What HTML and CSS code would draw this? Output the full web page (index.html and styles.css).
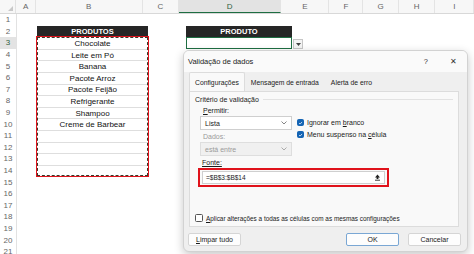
FILE: index.html
```html
<!DOCTYPE html>
<html>
<head>
    <meta charset="utf-8">
    <title>Validação de dados</title>
    <link rel="stylesheet" href="styles.css">
</head>
<body>
    <div class="sheet">
        <div class="colheads">
            <div class="corner"><span class="tri"></span></div>
            <div class="ch w-a">A</div>
            <div class="ch w-b">B</div>
            <div class="ch w-c">C</div>
            <div class="ch w-d active">D</div>
            <div class="ch w-e">E</div>
            <div class="ch w-f">F</div>
            <div class="ch w-g">G</div>
            <div class="ch w-h">H</div>
            <div class="ch w-i">I</div>
        </div>
        <div class="body">
            <div class="rowheads">
                <div class="rh">1</div>
                <div class="rh">2</div>
                <div class="rh active">3</div>
                <div class="rh">4</div>
                <div class="rh">5</div>
                <div class="rh">6</div>
                <div class="rh">7</div>
                <div class="rh">8</div>
                <div class="rh">9</div>
                <div class="rh">10</div>
                <div class="rh">11</div>
                <div class="rh">12</div>
                <div class="rh">13</div>
                <div class="rh">14</div>
                <div class="rh">15</div>
                <div class="rh">16</div>
                <div class="rh">17</div>
                <div class="rh">18</div>
                <div class="rh">19</div>
                <div class="rh">20</div>
                <div class="rh">21</div>
            </div>
            <div class="col w-a"></div>
            <div class="col w-b">
                <div class="cell"></div>
                <div class="cell head">PRODUTOS</div>
                <div class="list">
                    <div class="cell item">Chocolate</div>
                    <div class="cell item">Leite em Pó</div>
                    <div class="cell item">Banana</div>
                    <div class="cell item">Pacote Arroz</div>
                    <div class="cell item">Pacote Feijão</div>
                    <div class="cell item">Refrigerante</div>
                    <div class="cell item">Shampoo</div>
                    <div class="cell item">Creme de Barbear</div>
                    <div class="cell item"></div>
                    <div class="cell item"></div>
                    <div class="cell item"></div>
                    <div class="cell item"></div>
                </div>
            </div>
            <div class="col w-c"></div>
            <div class="col w-d">
                <div class="cell"></div>
                <div class="cell head">PRODUTO</div>
                <div class="cell sel">
                    <span class="dd">
                        <svg width="5" height="3" viewBox="0 0 5 3"><path d="M0 0h5L2.5 3z" fill="#444"/></svg>
                    </span>
                </div>
            </div>
        </div>
    </div>

    <!-- janela de validação -->
    <div class="dialog">
        <div class="title">
            <span>Validação de dados</span>
            <span class="title-btns"><span>?</span><span class="close">✕</span></span>
        </div>
        <div class="tabs">
            <span class="tab on">Configurações</span>
            <span class="tab">Mensagem de entrada</span>
            <span class="tab">Alerta de erro</span>
        </div>
        <div class="panel">
            <div class="group">
                <span>Critério de validação</span>
                <span class="rule"></span>
            </div>
            <div class="criteria">
                <div class="left">
                    <div class="lbl"><span><u>P</u>ermitir:</span></div>
                    <div class="select">
                        <span>Lista</span>
                        <svg width="6" height="4" viewBox="0 0 6 4"><path d="M0.5 0.5L3 3L5.5 0.5" fill="none" stroke="#666" stroke-width="0.8"/></svg>
                    </div>
                    <div class="lbl dim">Dados:</div>
                    <div class="select disabled">
                        <span>está entre</span>
                        <svg width="6" height="4" viewBox="0 0 6 4"><path d="M0.5 0.5L3 3L5.5 0.5" fill="none" stroke="#999" stroke-width="0.8"/></svg>
                    </div>
                </div>
                <div class="checks">
                    <div class="chk"><span class="box on"><svg width="6" height="6" viewBox="0 0 6 6"><path d="M1.2 3.1L2.5 4.3L4.9 1.7" fill="none" stroke="#fff" stroke-width="0.9"/></svg></span><span>Ignorar em <u>b</u>ranco</span></div>
                    <div class="chk"><span class="box on"><svg width="6" height="6" viewBox="0 0 6 6"><path d="M1.2 3.1L2.5 4.3L4.9 1.7" fill="none" stroke="#fff" stroke-width="0.9"/></svg></span><span>Menu suspenso na <u>c</u>élula</span></div>
                </div>
            </div>
            <div class="lbl fonte"><span><u>Fonte:</u></span></div>
            <div class="mark">
                <div class="source">
                    <span>=$B$3:$B$14</span>
                    <svg width="7" height="7" viewBox="0 0 7 7"><path d="M3.5 0.6L6 3.4H4.4V5H2.6V3.4H1z" fill="#222"/><path d="M1 6.2H6" stroke="#222" stroke-width="0.9"/></svg>
                </div>
            </div>
            <div class="chk apply"><span class="box"></span><span><u>A</u>plicar alterações a todas as células com as mesmas configurações</span></div>
        </div>
        <div class="footer">
            <span class="btn"><span><u>L</u>impar tudo</span></span>
            <span class="gap"></span>
            <span class="btn default">OK</span>
            <span class="btn">Cancelar</span>
        </div>
    </div>
</body>
</html>
```

FILE: styles.css
```css
body {
    margin: 0;
    width: 474px;
    height: 254px;
    overflow: hidden;
    position: relative;
    background: #fff;
    font-family: "Liberation Sans", Arial, sans-serif;
}
.sheet {
    display: flex;
    flex-direction: column;
}
.colheads {
    display: flex;
    height: 14px;
    background: #f7f7f7;
    border-bottom: 1px solid #d8d8d8;
    box-sizing: border-box;
}
.corner {
    width: 17px;
    position: relative;
    border-right: 1px solid #e2e2e2;
    box-sizing: border-box;
}
.tri {
    position: absolute;
    right: 2px;
    bottom: 2px;
    border-left: 5px solid transparent;
    border-bottom: 5px solid #c8c8c8;
}
.ch {
    display: flex;
    align-items: center;
    justify-content: center;
    font-size: 8px;
    color: #666;
    border-right: 1px solid #e4e4e4;
    box-sizing: border-box;
}
.ch.active {
    background: #e3e3e3;
    color: #2f5f3f;
    border-bottom: 1.5px solid #1e6e42;
}
.w-a { width: 20px; }
.w-b { width: 111px; }
.w-c { width: 38px; }
.w-d { width: 106px; }
.w-e { width: 50px; }
.w-f { width: 35px; }
.w-g { width: 37px; }
.w-h { width: 38px; }
.w-i { width: 40px; }

.body {
    display: flex;
}
.rowheads {
    width: 17px;
    display: flex;
    flex-direction: column;
    border-right: 1px solid #e2e2e2;
    box-sizing: border-box;
}
.rh {
    height: 11.6px;
    font-size: 8px;
    color: #666;
    display: flex;
    align-items: center;
    justify-content: center;
}
.rh.active {
    background: #e3e3e3;
    color: #2f5f3f;
}
.col {
    display: flex;
    flex-direction: column;
}
.cell {
    height: 11.6px;
    box-sizing: border-box;
    font-size: 8px;
    display: flex;
    align-items: center;
    justify-content: center;
    color: #111;
}
.cell.head {
    background: #262626;
    color: #fff;
    font-weight: bold;
    font-size: 7.5px;
}
.list {
    border: 1px dashed #3a3a2a;
    outline: 1.5px solid #e0121b;
}
.cell.item {
    height: 11.6px;
    border-bottom: 1px solid #dedede;
}
.list .cell.item:last-child {
    height: 9.6px;
    border-bottom: none;
}
.cell.sel {
    border: 1.5px solid #1e6e42;
    position: relative;
}
.dd {
    position: absolute;
    right: -12px;
    top: 1px;
    width: 8px;
    height: 8px;
    background: #f4f4f4;
    border: 1px solid #c6c6c6;
    display: flex;
    align-items: center;
    justify-content: center;
}

/* dialog */
.dialog {
    position: absolute;
    left: 183px;
    top: 50px;
    width: 285px;
    height: 202px;
    box-sizing: border-box;
    background: #efefef;
    border: 1px solid #d2d2d2;
    border-radius: 6px;
    box-shadow: 0 3px 10px rgba(0, 0, 0, 0.22);
    display: flex;
    flex-direction: column;
    overflow: hidden;
    font-family: "Liberation Sans", Arial, sans-serif;
    font-size: 7px;
    color: #1a1a1a;
}
.title {
    height: 21px;
    flex: none;
    display: flex;
    align-items: center;
    justify-content: space-between;
    padding: 0 10px 0 4px;
    background: #fafafa;
    font-size: 7.5px;
}
.title-btns {
    display: flex;
    gap: 22px;
    color: #333;
}
.close {
    font-size: 8px;
}
.tabs {
    display: flex;
    height: 19px;
    flex: none;
    padding-left: 5px;
    align-items: flex-end;
    font-size: 6.8px;
}
.tab {
    padding: 0 6px;
    height: 18px;
    display: flex;
    align-items: center;
    color: #222;
}
.tab.on {
    background: #f9f9f9;
    border: 1px solid #dcdcdc;
    border-bottom: none;
    border-radius: 2px 2px 0 0;
    padding: 0 5px;
}
.panel {
    margin: 0 8px 0 5px;
    height: 136px;
    flex: none;
    box-sizing: border-box;
    background: #f9f9f9;
    border: 1px solid #dcdcdc;
    padding: 3px 5px 0 5px;
    display: flex;
    flex-direction: column;
}
.group {
    display: flex;
    align-items: center;
    gap: 4px;
    height: 8px;
}
.rule {
    flex: 1;
    border-top: 1px solid #e2e2e2;
}
.criteria {
    display: flex;
    gap: 5px;
    margin-top: 3px;
    padding-left: 5px;
}
.left {
    width: 92px;
    display: flex;
    flex-direction: column;
}
.lbl {
    height: 9px;
    padding-left: 3px;
    display: flex;
    align-items: center;
}
.lbl.dim {
    color: #9a9a9a;
    margin-top: 2px;
}
.select {
    height: 14px;
    margin-top: 1px;
    box-sizing: border-box;
    background: #fff;
    border: 1px solid #cfcfcf;
    display: flex;
    align-items: center;
    justify-content: space-between;
    padding: 0 4px 0 4px;
}
.select.disabled {
    background: #f0f0f0;
    color: #9a9a9a;
    border-color: #dedede;
}
.checks {
    display: flex;
    flex-direction: column;
    gap: 5px;
    padding-top: 13px;
}
.chk {
    display: flex;
    align-items: center;
    gap: 3px;
}
.box {
    width: 7px;
    height: 7px;
    box-sizing: border-box;
    border: 1px solid #666;
    border-radius: 1.5px;
    background: #fff;
    display: flex;
    align-items: center;
    justify-content: center;
}
.box.on {
    background: #1464b4;
    border-color: #1464b4;
}
.lbl.fonte {
    margin-top: 2px;
    padding-left: 7px;
}
.mark {
    width: 191px;
    margin-left: 3px;
    margin-top: 1px;
    box-sizing: border-box;
    border: 2px solid #e0121b;
    padding: 1px 2px;
}
.source {
    height: 13px;
    box-sizing: border-box;
    background: #fff;
    border: 1px solid #cfcfcf;
    display: flex;
    align-items: center;
    justify-content: space-between;
    padding: 0 3px 0 3px;
    font-size: 6.5px;
}
.apply {
    margin-top: 27px;
    font-size: 6.4px;
}
.apply .box {
    width: 8px;
    height: 8px;
    border-color: #555;
}
.footer {
    flex: 1;
    display: flex;
    align-items: center;
    padding: 0 6px 0 4px;
    gap: 9px;
}
.gap {
    flex: 1;
}
.btn {
    width: 53px;
    height: 13px;
    box-sizing: border-box;
    background: #fdfdfd;
    border: 1px solid #d5d5d5;
    border-radius: 2px;
    display: flex;
    align-items: center;
    justify-content: center;
}
.btn.default {
    border-color: #7aa7d4;
}
```
